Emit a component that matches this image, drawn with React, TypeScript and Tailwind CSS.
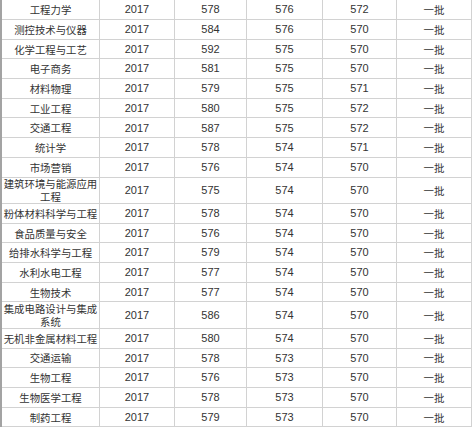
import React from 'react';

type Row = [string, string, string, string, string, string];

const rows: Row[] = [
  ['工程力学', '2017', '578', '576', '572', '一批'],
  ['测控技术与仪器', '2017', '584', '576', '570', '一批'],
  ['化学工程与工艺', '2017', '592', '575', '570', '一批'],
  ['电子商务', '2017', '581', '575', '570', '一批'],
  ['材料物理', '2017', '579', '575', '571', '一批'],
  ['工业工程', '2017', '580', '575', '572', '一批'],
  ['交通工程', '2017', '587', '575', '572', '一批'],
  ['统计学', '2017', '578', '574', '571', '一批'],
  ['市场营销', '2017', '576', '574', '570', '一批'],
  ['建筑环境与能源应用工程', '2017', '575', '574', '570', '一批'],
  ['粉体材料科学与工程', '2017', '578', '574', '570', '一批'],
  ['食品质量与安全', '2017', '576', '574', '570', '一批'],
  ['给排水科学与工程', '2017', '579', '574', '570', '一批'],
  ['水利水电工程', '2017', '577', '574', '570', '一批'],
  ['生物技术', '2017', '577', '574', '570', '一批'],
  ['集成电路设计与集成系统', '2017', '586', '574', '570', '一批'],
  ['无机非金属材料工程', '2017', '580', '574', '570', '一批'],
  ['交通运输', '2017', '578', '573', '570', '一批'],
  ['生物工程', '2017', '576', '573', '570', '一批'],
  ['生物医学工程', '2017', '578', '573', '570', '一批'],
  ['制药工程', '2017', '579', '573', '570', '一批'],
];

const cell = 'shrink-0 border-r border-[#d2d2d2] flex items-center justify-center text-center';
const numCell = `${cell} text-[11px] font-['Liberation_Sans','Noto_Sans_CJK_SC',sans-serif]`;
const cjkCell = `${cell} text-[10.4px] leading-[13px] font-['Noto_Sans_CJK_SC',sans-serif]`;

export default function App() {
  return (
    <div className="w-[474px] h-[428px] overflow-hidden bg-white text-[#333]">
      <div className="w-[472px] border-l-2 border-[#a3a3a3]">
        {rows.map((r, i) => {
          const tall = r[0].length > 9;
          const h = i === 0 ? 'h-[20px]' : tall ? 'h-[26.5px]' : 'h-[19.7px]';
          return (
            <div key={i} className={`flex ${h} border-b border-[#d2d2d2]`}>
              <div className={`w-[98px] ${cjkCell}`}>{r[0]}</div>
              <div className={`w-[75px] ${numCell}`}>{r[1]}</div>
              <div className={`w-[72px] ${numCell}`}>{r[2]}</div>
              <div className={`w-[76px] ${numCell}`}>{r[3]}</div>
              <div className={`w-[74px] ${numCell}`}>{r[4]}</div>
              <div className={`w-[75px] ${cjkCell}`}>{r[5]}</div>
            </div>
          );
        })}
      </div>
    </div>
  );
}
